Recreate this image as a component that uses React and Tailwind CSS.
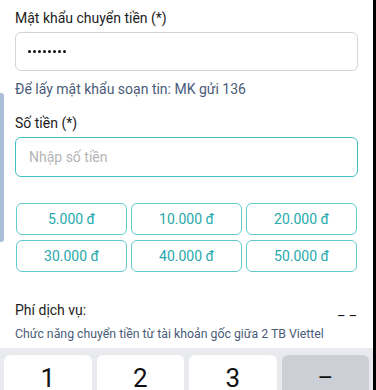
import React from "react";

const amounts = ["5.000 đ", "10.000 đ", "20.000 đ", "30.000 đ", "40.000 đ", "50.000 đ"];

export default function App() {
  return (
    <div
      className="relative w-[376px] h-[390px] overflow-hidden bg-white flex"
      style={{ fontFamily: "Roboto, 'Noto Sans', sans-serif" }}
    >
      <div className="w-[373px] h-full flex flex-col">
        <div className="px-[15px] pt-[8px] flex flex-col">
          <div className="text-[14px] leading-[20px] text-[#1c1c1c]">Mật khẩu chuyển tiền (*)</div>
          <div className="mt-[4px] h-[39px] border border-[#d4d4d4] rounded-[6px] flex items-center pl-[12px]">
            <div className="flex gap-[2px]">
              {Array.from({ length: 8 }).map((_, i) => (
                <span key={i} className="w-[3px] h-[3px] rounded-full bg-[#111]" />
              ))}
            </div>
          </div>
          <div className="mt-[8px] text-[14px] leading-[20px] text-[#4a5b78]">
            Để lấy mật khẩu soạn tin: MK gửi 136
          </div>
          <div className="mt-[14px] text-[14px] leading-[20px] text-[#1c1c1c]">Số tiền (*)</div>
          <div className="mt-[4px] h-[40px] border border-[#45c0c0] rounded-[6px] flex items-center pl-[13px] text-[14px] text-[#b4b4b4]">
            Nhập số tiền
          </div>
          <div className="mt-[26px] px-[1px] grid grid-cols-3 gap-x-[4px] gap-y-[5px]">
            {amounts.map((a) => (
              <div
                key={a}
                className="h-[32px] border border-[#62cccc] rounded-[6px] flex items-center justify-center text-[14px] text-[#28a9ab]"
              >
                {a}
              </div>
            ))}
          </div>
          <div className="mt-[28px] flex items-center justify-between text-[14px] leading-[20px] text-[#1c1c1c]">
            <span>Phí dịch vụ:</span>
            <span className="tracking-[1px] pr-[1px]">_ _</span>
          </div>
          <div className="mt-[6px] text-[12.3px] leading-[16px] text-[#4a5b78] whitespace-nowrap">
            Chức năng chuyển tiền từ tài khoản gốc giữa 2 TB Viettel
          </div>
        </div>
        <div className="mt-[6px] flex-1 bg-[#e9eaee] pt-[7px] px-[4px] flex gap-[5px]">
          {["1", "2", "3"].map((k) => (
            <div
              key={k}
              className="flex-1 h-[35px] bg-white rounded-t-[6px] flex items-start justify-center pt-[12px] text-[26px] leading-[22px] text-[#111]"
            >
              {k}
            </div>
          ))}
          <div className="flex-1 h-[35px] bg-[#ccd0d6] rounded-t-[6px] flex items-start justify-center pt-[12px] text-[24px] leading-[22px] text-[#111]">
            –
          </div>
        </div>
      </div>
      <div className="w-[3px] h-full bg-black" />
      <div className="absolute left-0 top-[93px] w-[4px] h-[149px] bg-[#a9bdd6] rounded-r-[3px]" />
    </div>
  );
}
